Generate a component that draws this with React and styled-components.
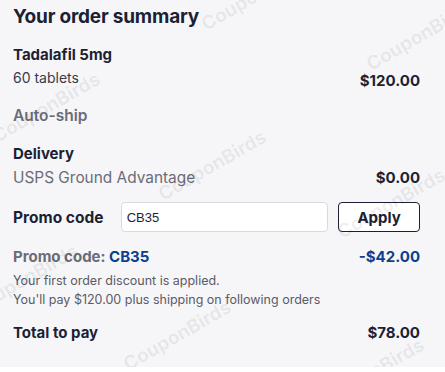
import React from 'react';
import styled, { createGlobalStyle } from 'styled-components';

const GlobalStyle = createGlobalStyle`
	html, body {
		margin: 0;
		padding: 0;
		background: #ffffff;
	}
	body {
		font-family: Inter, 'Noto Sans', sans-serif;
		color: #1d1f33;
	}
`;

// Styles
const Panel = styled.div`
	position: relative;
	overflow: hidden;
	width: 445px;
	height: 367px;
	box-sizing: border-box;
	background: #f6f6f9;
	padding: 4px 25px 0 13px;
`;

const Title = styled.h2`
	margin: 0;
	font-size: 19px;
	font-weight: 700;
	line-height: 26px;
	letter-spacing: -0.2px;
`;

const Section = styled.div`
	margin-top: ${(p) => p.gap || 0}px;
`;

const Row = styled.div`
	display: flex;
	justify-content: space-between;
	align-items: ${(p) => p.align || 'center'};
	margin-top: ${(p) => p.gap || 0}px;
`;

const Label = styled.div`
	font-size: ${(p) => p.size || 15}px;
	font-weight: ${(p) => p.weight || 700};
	color: ${(p) => p.color || '#1d1f33'};
	line-height: ${(p) => p.lh || 20}px;
`;

const Amount = styled.div`
	font-size: 15px;
	font-weight: 700;
	color: ${(p) => p.color || '#1d1f33'};
	line-height: ${(p) => p.lh || 20}px;
`;

const Code = styled.span`
	color: #0d3f8c;
`;

const PromoForm = styled.div`
	display: flex;
	align-items: center;
`;

const PromoLabel = styled.label`
	width: 108px;
	font-size: 15.5px;
	font-weight: 700;
`;

const Input = styled.input`
	width: 208px;
	height: 30px;
	box-sizing: border-box;
	border: 1px solid #d9dadd;
	border-radius: 4px;
	background: #ffffff;
	padding: 0 5px;
	font-family: 'Liberation Sans', Arial, sans-serif;
	font-size: 13px;
	color: #1d1f33;
	outline: none;
`;

const ApplyButton = styled.button`
	margin-left: 10px;
	width: 82px;
	height: 30px;
	border: 1px solid #1d1f33;
	border-radius: 4px;
	background: #ffffff;
	font-family: Inter, sans-serif;
	font-size: 15px;
	font-weight: 700;
	color: #1d1f33;
	cursor: pointer;
`;

const Notes = styled.div`
	margin-top: 4px;
`;

const Note = styled.div`
	font-size: 12.5px;
	color: #5a5b66;
	line-height: 19px;
`;

const Watermark = styled.span`
	position: absolute;
	left: ${(p) => p.x}px;
	top: ${(p) => p.y}px;
	transform: rotate(-30deg);
	transform-origin: left center;
	font-family: Inter, sans-serif;
	font-size: 19px;
	font-weight: 700;
	color: rgba(0, 0, 0, 0.065);
	white-space: nowrap;
	pointer-events: none;
`;

const marks = [
	{ x: 203, y: 14 },
	{ x: -6, y: 126 },
	{ x: 368, y: 54 },
	{ x: 160, y: 184 },
	{ x: 339, y: 222 },
	{ x: -28, y: 298 },
	{ x: 125, y: 354 },
	{ x: 318, y: 392 },
];

export default function App() {
	return (
		<React.Fragment>
			<GlobalStyle />
			<Panel>
				<Title>Your order summary</Title>

				<Section gap={15}>
					<Label>Tadalafil 5mg</Label>
					<Row align="flex-end" gap={2}>
						<Label size={14} weight={400} color="#3a3b47" lh={22}>
							60 tablets
						</Label>
						<Amount lh={16}>$120.00</Amount>
					</Row>
				</Section>

				<Section gap={17}>
					<Label size={15.5} weight={600} color="#6b6c76">
						Auto-ship
					</Label>
				</Section>

				<Section gap={18}>
					<Label>Delivery</Label>
					<Row gap={1}>
						<Label size={15.4} weight={400} color="#6b6c76" lh={26}>
							USPS Ground Advantage
						</Label>
						<Amount>$0.00</Amount>
					</Row>
				</Section>

				<Section gap={11}>
					<PromoForm>
						<PromoLabel>Promo code</PromoLabel>
						<Input defaultValue="CB35" />
						<ApplyButton>Apply</ApplyButton>
					</PromoForm>
				</Section>

				<Section gap={15}>
					<Row>
						<Label color="#6b6c76">
							Promo code: <Code>CB35</Code>
						</Label>
						<Amount color="#0d3f8c">-$42.00</Amount>
					</Row>
					<Notes>
						<Note>Your first order discount is applied.</Note>
						<Note>You'll pay $120.00 plus shipping on following orders</Note>
					</Notes>
				</Section>

				<Section gap={14}>
					<Row>
						<Label>Total to pay</Label>
						<Amount>$78.00</Amount>
					</Row>
				</Section>

				{marks.map((m, i) => (
					<Watermark key={i} x={m.x} y={m.y}>
						CouponBirds
					</Watermark>
				))}
			</Panel>
		</React.Fragment>
	);
}
